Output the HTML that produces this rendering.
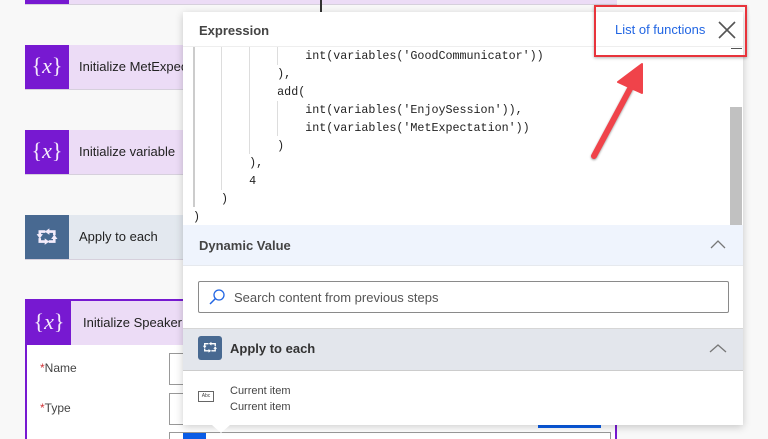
<!DOCTYPE html>
<html style="height:439px;overflow:hidden"><head><style>
body{margin:0;width:768px;height:439px;background:#f8f8f8;position:relative;overflow:hidden;font-family:"Liberation Sans",Arial,sans-serif;}
.abs{position:absolute}
.card{position:absolute;left:25px;height:44px;width:592px;background:#ecdcf6;border-bottom:1px solid #d6d0dc}
.ic{position:absolute;left:0;top:0;width:44px;height:44px;background:#7719d1;color:#f4ecfb;font:22px "Liberation Serif",serif;text-align:center;line-height:42px}
.lbl{position:absolute;left:54px;top:14px;font-size:13px;color:#222}
.code{position:absolute;left:193px;font:11.7px "Liberation Mono",monospace;color:#222;white-space:pre}
.g{position:absolute;width:1px;background:#ddd}
</style></head><body>
<div class="card" style="top:-40px"><div class="ic"></div></div>
<div class="abs" style="left:320px;top:0;width:2px;height:12px;background:#333"></div>
<div class="card" style="top:45px"><div class="ic">{<i>x</i>}</div><div class="lbl">Initialize MetExpectation</div></div>
<div class="card" style="top:130px"><div class="ic">{<i>x</i>}</div><div class="lbl">Initialize variable</div></div>
<div class="card" style="top:215px;background:#e3e8ef"><div class="ic" style="background:#486991;font:bold 18px sans-serif;line-height:44px">⮔</div><div class="lbl">Apply to each</div></div>
<div class="abs" style="left:25px;top:299px;width:588px;height:140px;border:2px solid #7719d1;border-bottom:none;background:#fff;overflow:hidden">
 <div class="abs" style="left:0;top:0;width:588px;height:44px;background:#ecdcf6"></div>
 <div class="ic" style="height:44px">{<i>x</i>}</div>
 <div class="lbl" style="left:56px">Initialize Speaker</div>
 <div class="abs" style="left:13px;top:60px;font-size:12px;color:#444"><span style="color:#d13438">*</span>Name</div>
 <div class="abs" style="left:13px;top:100px;font-size:12px;color:#444"><span style="color:#d13438">*</span>Type</div>
 <div class="abs" style="left:142px;top:52px;width:440px;height:30px;border:1px solid #999"></div>
 <div class="abs" style="left:142px;top:92px;width:440px;height:30px;border:1px solid #999"></div>
 <div class="abs" style="left:142px;top:131px;width:440px;height:7px;border:1px solid #999;border-bottom:none"></div>
 <div class="abs" style="left:156px;top:132px;width:23px;height:6px;background:#0a5ce6"></div>
 <div class="abs" style="left:511px;top:123px;width:63px;height:4px;background:#0a5ce6"></div>
</div>
<!-- popup -->
<div class="abs" style="left:183px;top:12px;width:560px;height:413px;background:#fff;box-shadow:0 2px 8px rgba(0,0,0,.2)">
 <div class="abs" style="left:0;top:0;width:560px;height:34px;border-bottom:1px solid #eee"></div>
 <div class="abs" style="left:16px;top:11px;font-size:13px;font-weight:bold;color:#444">Expression</div>
 <div class="abs" style="left:432px;top:10px;font-size:13px;color:#2266e3">List of functions</div>
 <svg class="abs" style="left:534px;top:9px" width="20" height="18"><path d="M2 1L18 17M18 1L2 17" stroke="#555" stroke-width="1.6"/></svg>
 <div class="abs" style="left:548px;top:36px;width:11px;height:1px;background:#555"></div>
 <div class="abs" style="left:547px;top:95px;width:12px;height:118px;background:#c1c1c1"></div>
 <div class="abs" style="left:0;top:213px;width:560px;height:40px;background:#eff4fd;border-bottom:1px solid #e6e9ee"></div>
 <div class="abs" style="left:16px;top:226px;font-size:13px;font-weight:bold;color:#444">Dynamic Value</div>
 <svg class="abs" style="left:527px;top:227px" width="16" height="10"><path d="M1 9L8 2L15 9" stroke="#777" fill="none" stroke-width="1.3"/></svg>
 <div class="abs" style="left:15px;top:269px;width:529px;height:30px;border:1px solid #8a8a8a;border-radius:2px"></div>
 <svg class="abs" style="left:25px;top:276px" width="18" height="18"><circle cx="11" cy="7" r="5" stroke="#2266e3" fill="none" stroke-width="1.3"/><path d="M7.5 10.5L2 16" stroke="#2266e3" stroke-width="1.5"/></svg>
 <div class="abs" style="left:51px;top:278px;font-size:13px;color:#555">Search content from previous steps</div>
 <div class="abs" style="left:0;top:316px;width:560px;height:41px;background:#e3e6ec;border-top:1px solid #d6d6d6;border-bottom:1px solid #ccc"></div>
 <div class="abs" style="left:15px;top:324px;width:24px;height:24px;background:#486991;border-radius:3px;color:#fff;font-size:13px;text-align:center;line-height:24px">⮔</div>
 <div class="abs" style="left:47px;top:329px;font-size:13px;font-weight:bold;color:#333">Apply to each</div>
 <svg class="abs" style="left:526px;top:331px" width="18" height="10"><path d="M1 9L9 2L17 9" stroke="#777" fill="none" stroke-width="1.3"/></svg>
 <div class="abs" style="left:15px;top:379px;width:14px;height:9px;border:1px solid #666;font-size:5px;line-height:9px;text-align:center;color:#444">Abc</div>
 <div class="abs" style="left:47px;top:371px;font-size:11px;color:#444;line-height:16px">Current item<br>Current item</div>
</div>
<div class="abs" style="left:212px;top:425px;width:0;height:0;border-left:9px solid transparent;border-right:9px solid transparent;border-top:8px solid #fff"></div>
<div class="g" style="left:193px;top:47px;height:160px;width:2px;background:#ccc"></div>
<div class="g" style="left:221px;top:47px;height:143px"></div>
<div class="g" style="left:249px;top:47px;height:107px"></div>
<div class="g" style="left:277px;top:47px;height:18px"></div>
<div class="g" style="left:277px;top:101px;height:35px"></div>
<div class="code" style="top:48px;line-height:17.9px">                int(variables('GoodCommunicator'))
            ),
            add(
                int(variables('EnjoySession')),
                int(variables('MetExpectation'))
            )
        ),
        4
    )
)</div>
<div class="abs" style="left:594px;top:5px;width:149px;height:48px;border:2px solid #e8333b;box-shadow:0 1px 3px rgba(0,0,0,.3)"></div>
<svg class="abs" style="left:580px;top:55px" width="80" height="115"><path d="M14 101L52 30" stroke="#f0434a" stroke-width="6" stroke-linecap="round" style="filter:drop-shadow(0 1px 1px rgba(0,0,0,.4))"/><path d="M38 27L62 9L62 38Z" fill="#f0434a" stroke="#f0434a" stroke-width="2" stroke-linejoin="round"/></svg>
</body></html>
